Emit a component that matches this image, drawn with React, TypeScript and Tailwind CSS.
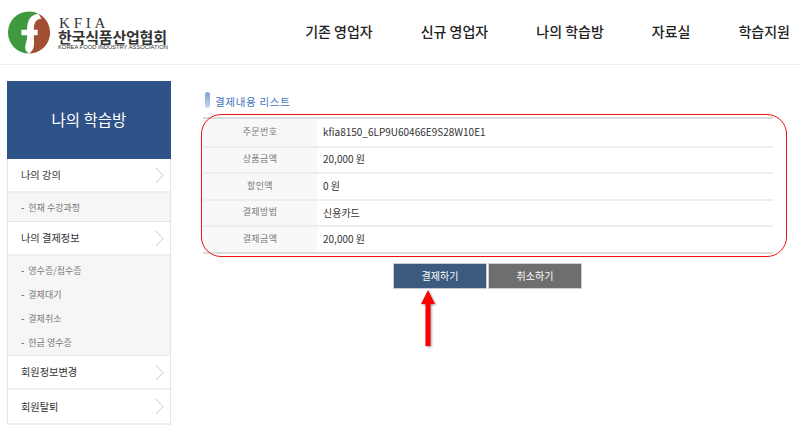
const font = { fontFamily: '"Noto Sans CJK KR", "Noto Sans", sans-serif' };

const nav = ['기존 영업자', '신규 영업자', '나의 학습방', '자료실', '학습지원'];

const rows = [
  ['주문번호', 'kfia8150_6LP9U60466E9S28W10E1'],
  ['상품금액', '20,000 원'],
  ['할인액', '0 원'],
  ['결제방법', '신용카드'],
  ['결제금액', '20,000 원'],
];

function Logo() {
  return (
    <div className="flex items-center">
      <svg width="44" height="45" viewBox="0 0 46 46">
        <path d="M23 1A22 22 0 0 0 23 45C15 40 22 33 21 26L15 26V20L21 20C21 10 25 4 33 3.4A22 22 0 0 0 23 1Z" fill="#3f9a3f" />
        <path d="M33 3.4A22 22 0 0 1 23 45C30 41 28 33 28 26L32 26V20L28 20C28 14 30 8 36 9Z" fill="#a34f33" />
      </svg>
      <div className="ml-[7px] flex flex-col pt-[2px]">
        <span className="pl-px text-[15px] leading-[14px] tracking-[3.8px] text-[#333]" style={{ fontFamily: '"Liberation Serif", serif' }}>KFIA</span>
        <span className="text-[15px] leading-[14px] font-bold tracking-[-0.2px] text-[#333]">한국식품산업협회</span>
        <span className="text-[5.8px] leading-[7px] whitespace-nowrap text-[#333]" style={{ fontFamily: '"Liberation Sans", sans-serif' }}>KOREA FOOD INDUSTRY ASSOCIATION</span>
      </div>
    </div>
  );
}

function MainItem({ label, tall }: { label: string; tall?: boolean }) {
  return (
    <div className={`flex ${tall ? 'h-[35px]' : 'h-[34px]'} items-center justify-between border-b-2 border-[#eee] bg-white pr-[6px] pl-[13px] text-[10.2px] text-[#333]`}>
      <span>{label}</span>
      <svg width="9" height="17" viewBox="0 0 9 17" fill="none" stroke="#ccc">
        <path d="M1 1L8 8.5L1 16" />
      </svg>
    </div>
  );
}

function SubItem({ label }: { label: string }) {
  return (
    <div className="flex h-6 items-center pl-[13px] text-[9px] text-[#777]">
      <span className="mr-[4px] font-bold">-</span>
      {label}
    </div>
  );
}

function Sidebar() {
  return (
    <aside className="w-[164px] shrink-0">
      <div className="flex h-[78px] items-center justify-center bg-[#2f5288] text-[15.5px] text-white">나의 학습방</div>
      <div className="border-x border-[#e6e6e6]">
        <MainItem label="나의 강의" />
        <div className="flex h-[29px] items-center border-b border-[#e6e6e6] bg-[#f6f6f6] pt-[2px] pl-[13px] text-[9px] text-[#777]">
          <span className="mr-[4px] font-bold">-</span>현재 수강과정
        </div>
        <MainItem label="나의 결제정보" />
        <div className="flex h-[100px] flex-col justify-center border-b border-[#e6e6e6] bg-[#f6f6f6] pt-[2px]">
          <SubItem label="영수증/접수증" />
          <SubItem label="결제대기" />
          <SubItem label="결제취소" />
          <SubItem label="현금 영수증" />
        </div>
        <MainItem label="회원정보변경" />
        <MainItem label="회원탈퇴" tall />
      </div>
    </aside>
  );
}

export default function App() {
  return (
    <div className="h-[427px] w-[800px] overflow-hidden bg-white" style={font}>
      <header className="flex h-[65px] items-center border-b border-[#eee] pl-[7px]">
        <Logo />
        <nav className="ml-auto flex items-center gap-[48px] pr-[10px]">
          {nav.map((n) => (
            <span key={n} className="pb-[2px] text-center text-[14px] font-medium whitespace-nowrap text-[#222]">{n}</span>
          ))}
        </nav>
      </header>

      <div className="flex pt-4 pl-[7px]">
        <Sidebar />

        <main className="relative ml-[32px] w-[570px]">
          <div className="mt-[10px] flex h-[21px] items-center">
            <span className="mt-[-4px] ml-[2px] h-[16px] w-[5px] rounded-full bg-gradient-to-b from-[#7fa0cf] to-[#c9daf0]" />
            <span className="ml-[5px] text-[10.5px] tracking-[0.7px] text-[#3f74c0]">결제내용 리스트</span>
          </div>

          <div className="relative mt-[5px]">
            <div className="border-y-2 border-[#ddd]">
              {rows.map(([k, v], i) => (
                <div key={k} className={`flex h-[26.6px] items-center ${i > 0 ? 'border-t-2 border-[#eee]' : ''}`}>
                  <div className="flex h-full w-[114px] items-center justify-center bg-[#f8f8f8] pb-[2px] text-[9px] tracking-[0.4px] text-[#777]">{k}</div>
                  <div className="pb-[2px] pl-[6px] text-[10px] text-[#333]">{v}</div>
                </div>
              ))}
            </div>
            <div className="absolute top-[-3px] left-[-2px] h-[143px] w-[586px] rounded-[20px] border-[1.5px] border-[#f01010]" />
          </div>

          <div className="mt-[9px] flex justify-center gap-[1.5px] pr-[1px]">
            <button className="h-[26px] w-[93.5px] border border-[#c5ccd6] bg-[#3b5a7e] text-[10px] text-white">결제하기</button>
            <button className="h-[26px] w-[93.5px] border border-[#cfcfcf] bg-[#6e6e6e] text-[10px] text-white">취소하기</button>
          </div>

          <svg className="absolute top-[209px] left-[216px] drop-shadow-[1px_1px_1px_rgba(0,0,0,0.4)]" width="18" height="57" viewBox="0 0 18 57">
            <path d="M9 0L16 14H11.5V56H6.5V14H2Z" fill="#fe0000" />
          </svg>
        </main>
      </div>
    </div>
  );
}
